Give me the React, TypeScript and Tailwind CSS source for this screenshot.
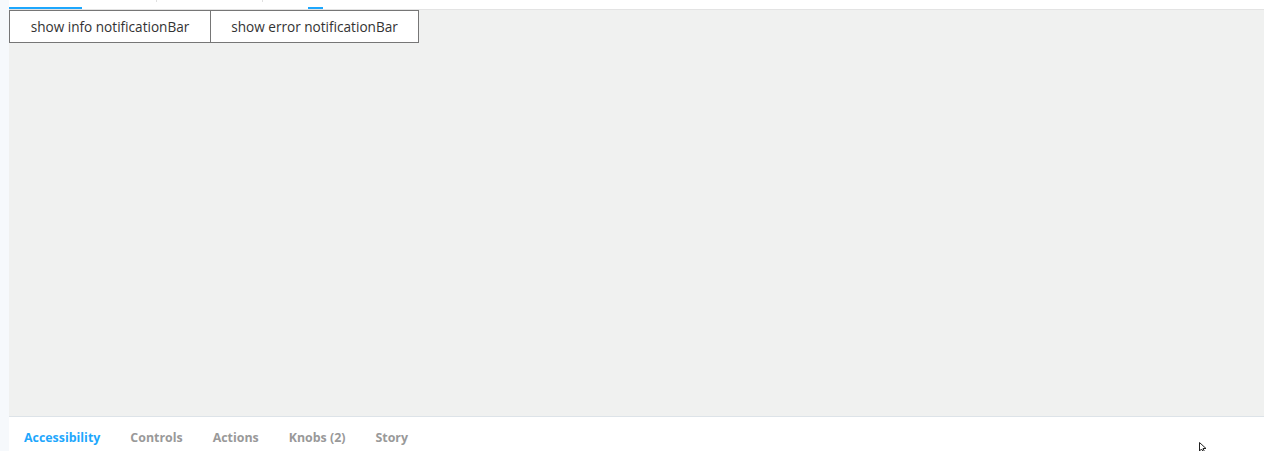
import React from 'react';

const tabs = ['Accessibility', 'Controls', 'Actions', 'Knobs (2)', 'Story'];

const App: React.FC = () => {
  return (
    <div className="flex h-[451px] w-[1265px] overflow-hidden bg-white" style={{ fontFamily: '"Open Sans", "Noto Sans", sans-serif' }}>
      <div className="w-[9px] shrink-0 bg-[#f6f9fc]" />
      <div className="relative flex w-[1255px] flex-col">
        {/* top toolbar remnant */}
        <div className="relative h-[10px] shrink-0 border-b border-[#e3e3e3] bg-white">
          <div className="absolute left-0 top-[7px] h-[2px] w-[73px] bg-[#1ea7fd]" />
          <div className="absolute left-[147px] top-0 h-[2px] w-px bg-[#e0e0e0]" />
          <div className="absolute left-[253px] top-0 h-[2px] w-px bg-[#e0e0e0]" />
          <div className="absolute left-[299px] top-[7px] h-[2px] w-[15px] bg-[#1ea7fd]" />
        </div>

        {/* canvas */}
        <div className="h-[406px] shrink-0 bg-[#f0f1f0]">
          <div className="flex">
            <button className="h-[33px] w-[202px] border border-[#767676] bg-white pt-px text-[13.6px] text-[#333]">
              show info notificationBar
            </button>
            <button className="h-[33px] w-[208px] border border-l-0 border-[#767676] bg-white pt-px text-[13.6px] text-[#333]">
              show error notificationBar
            </button>
          </div>
        </div>

        {/* addons panel */}
        <div className="flex flex-1 items-center gap-[30px] border-t border-[#dde3e8] bg-white pl-[15px] pt-[8px]">
          {tabs.map((t, i) => (
            <span
              key={t}
              className={`text-[12.4px] font-bold ${i === 0 ? 'text-[#1ea7fd]' : 'text-[#999]'}`}
            >
              {t}
            </span>
          ))}
        </div>

        {/* mouse cursor */}
        <svg className="absolute left-[1190px] top-[442px]" width="10" height="12" viewBox="0 0 10 12">
          <path d="M0.5 0.5 L0.5 9 L2.5 7 L5 11 L6 10.5 L4 6.5 L7 6.5 Z" fill="white" stroke="#222" strokeWidth="1" />
        </svg>
      </div>
      <div className="w-px shrink-0 bg-white" />
    </div>
  );
};

export default App;
